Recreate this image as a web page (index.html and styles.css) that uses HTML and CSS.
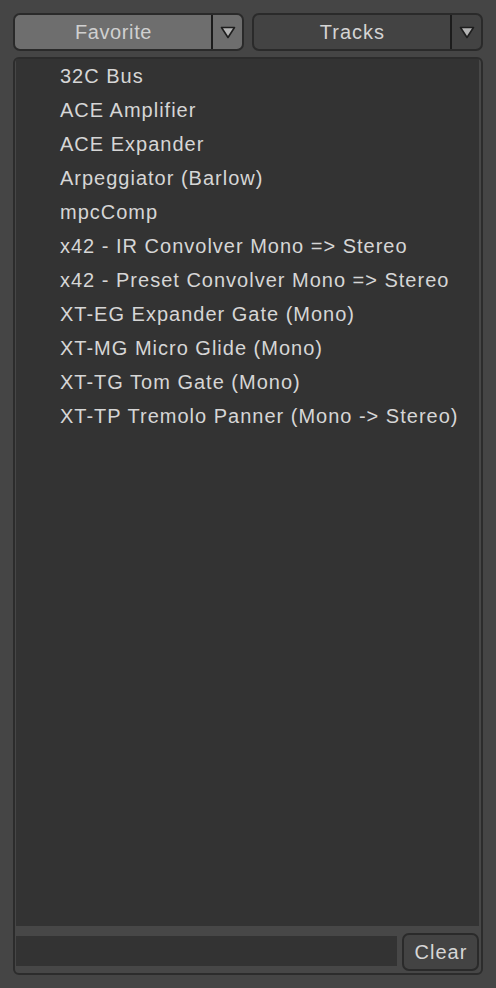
FILE: index.html
```html
<!DOCTYPE html>
<html>
<head>
<meta charset="utf-8">
<link rel="stylesheet" href="styles.css">
</head>
<body>
<div class="app">
  <div class="tabs">
    <div class="select select--active">
      <div class="select-label">Favorite</div>
      <div class="select-arrow">
        <svg width="16" height="13" viewBox="0 0 16 13"><polygon points="1.5,1.5 14.5,1.5 8,11.5" fill="#b4b4b4" stroke="#1e1e1e" stroke-width="1.6" stroke-linejoin="round"/></svg>
      </div>
    </div>
    <div class="select">
      <div class="select-label">Tracks</div>
      <div class="select-arrow">
        <svg width="16" height="13" viewBox="0 0 16 13"><polygon points="1.5,1.5 14.5,1.5 8,11.5" fill="#b4b4b4" stroke="#1e1e1e" stroke-width="1.6" stroke-linejoin="round"/></svg>
      </div>
    </div>
  </div>
  <div class="panel">
    <ul class="list">
      <li>32C Bus</li>
      <li>ACE Amplifier</li>
      <li>ACE Expander</li>
      <li>Arpeggiator (Barlow)</li>
      <li>mpcComp</li>
      <li>x42 - IR Convolver Mono =&gt; Stereo</li>
      <li>x42 - Preset Convolver Mono =&gt; Stereo</li>
      <li>XT-EG Expander Gate (Mono)</li>
      <li>XT-MG Micro Glide (Mono)</li>
      <li>XT-TG Tom Gate (Mono)</li>
      <li>XT-TP Tremolo Panner (Mono -&gt; Stereo)</li>
    </ul>
    <div class="footer">
      <div class="search"></div>
      <div class="clear-btn">Clear</div>
    </div>
  </div>
</div>
</body>
</html>
```

FILE: styles.css
```css
html, body {
  margin: 0;
  padding: 0;
  background: #454545;
}

body {
  font-family: "Liberation Sans", Arial, sans-serif;
  color: #d6d6d6;
  letter-spacing: 1px;
}

.app {
  box-sizing: border-box;
  width: 496px;
  height: 988px;
  padding: 13px 13px 13px 13px;
  display: flex;
  flex-direction: column;
}

.tabs {
  display: flex;
  gap: 8px;
  height: 38px;
  flex: none;
}

.select {
  flex: 1;
  display: flex;
  box-sizing: border-box;
  border: 2px solid #2a2a2a;
  border-radius: 7px;
  background: #434343;
  overflow: hidden;
}

.select--active {
  background: #6e6e6e;
}

.select-label {
  flex: 1;
  display: flex;
  align-items: center;
  justify-content: center;
  font-size: 20px;
  color: #d4d4d4;
  padding-left: 1px;
}

.select--active .select-label {
  color: #d0d0d0;
  letter-spacing: 0.6px;
}

.select-arrow {
  width: 29px;
  border-left: 2px solid #1c1c1c;
  display: flex;
  align-items: center;
  justify-content: center;
  padding-top: 1px;
}

.panel {
  flex: 1;
  margin-top: 6px;
  box-sizing: border-box;
  border: 2px solid #2c2c2c;
  border-radius: 6px;
  background: #474747;
  padding: 0 2px 0 1px;
  display: flex;
  flex-direction: column;
}

.list {
  flex: 1;
  margin: 0;
  padding: 0 0 0 44px;
  list-style: none;
  background: #333333;
  font-size: 20px;
  line-height: 34px;
  color: #d6d6d6;
}

.footer {
  height: 47px;
  flex: none;
  display: flex;
  align-items: flex-start;
}

.search {
  flex: 1;
  height: 30px;
  margin-top: 10px;
  background: #333333;
}

.clear-btn {
  box-sizing: border-box;
  width: 77px;
  height: 38px;
  margin-top: 7px;
  margin-left: 5px;
  border: 2px solid #2a2a2a;
  border-radius: 7px;
  background: #434343;
  display: flex;
  align-items: center;
  justify-content: center;
  font-size: 20px;
  color: #d6d6d6;
  padding-left: 1px;
}
```
